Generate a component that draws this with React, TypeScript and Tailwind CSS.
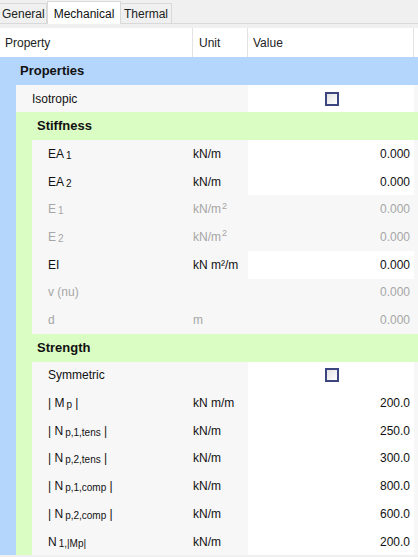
import { ReactNode } from 'react';

const FONT = { fontFamily: '"Liberation Sans", Arial, sans-serif' };

type Row = {
  label: ReactNode;
  unit?: ReactNode;
  value?: string;
  check?: boolean;
  disabled?: boolean;
};

function Sub({ children }: { children: ReactNode }) {
  return <sub className="text-[10px] ml-[2px] relative top-[1px]">{children}</sub>;
}

function Checkbox() {
  return (
    <div className="w-[14px] h-[14px] border-2 border-[#3b4580] bg-gradient-to-br from-[#e4e4e4] to-[#ffffff]" />
  );
}

const sq = <sup className="text-[9px] ml-[1px]">2</sup>;

const stiffness: Row[] = [
  { label: <>EA<Sub>1</Sub></>, unit: 'kN/m', value: '0.000' },
  { label: <>EA<Sub>2</Sub></>, unit: 'kN/m', value: '0.000' },
  { label: <>E<Sub>1</Sub></>, unit: <>kN/m{sq}</>, value: '0.000', disabled: true },
  { label: <>E<Sub>2</Sub></>, unit: <>kN/m{sq}</>, value: '0.000', disabled: true },
  { label: 'EI', unit: 'kN m²/m', value: '0.000' },
  { label: 'v (nu)', value: '0.000', disabled: true },
  { label: 'd', unit: 'm', value: '0.000', disabled: true },
];

const strength: Row[] = [
  { label: 'Symmetric', check: true },
  { label: <>| M<Sub>p</Sub> |</>, unit: 'kN m/m', value: '200.0' },
  { label: <>| N<Sub>p,1,tens</Sub> |</>, unit: 'kN/m', value: '250.0' },
  { label: <>| N<Sub>p,2,tens</Sub> |</>, unit: 'kN/m', value: '300.0' },
  { label: <>| N<Sub>p,1,comp</Sub> |</>, unit: 'kN/m', value: '800.0' },
  { label: <>| N<Sub>p,2,comp</Sub> |</>, unit: 'kN/m', value: '600.0' },
  { label: <>N<Sub>1,|Mp|</Sub></>, unit: 'kN/m', value: '200.0' },
];

function DataRow({ row }: { row: Row }) {
  const text = row.disabled ? 'text-[#a6a6a6]' : 'text-[#111]';
  return (
    <div className={`flex h-[27.7px] items-center bg-[#f7f7f7] ${text}`}>
      <div className="w-[161px] shrink-0 pl-[16px] whitespace-nowrap">{row.label}</div>
      <div className="w-[55px] shrink-0 whitespace-nowrap">{row.unit}</div>
      <div
        className={`w-[166px] h-full shrink-0 flex items-center ${row.disabled ? '' : 'bg-white'} ${
          row.check ? 'justify-start pl-[77px]' : 'justify-end pr-[4px]'
        }`}
      >
        {row.check ? <Checkbox /> : row.value}
      </div>
      <div className="flex-1" />
    </div>
  );
}

function Group({ title, children }: { title: string; children: ReactNode }) {
  return (
    <div className="flex bg-[#dafdc3]">
      <div className="w-[16px] shrink-0" />
      <div className="flex-1">
        <div className="h-[27.7px] flex items-center pl-[5px] font-bold text-[13px] text-[#111]">{title}</div>
        {children}
      </div>
    </div>
  );
}

export default function App() {
  return (
    <div className="w-[418px] h-[557px] overflow-hidden bg-[#f0f0f0] text-[12px]" style={FONT}>
      {/* Tabs */}
      <div className="h-[24px] flex items-end border-b border-[#d9d9d9]">
        <div className="h-[20px] w-[47px] pl-[2px] flex items-center border-r border-t border-[#d9d9d9] text-[#222]">General</div>
        <div className="h-[23px] w-[74px] flex items-start pt-[3px] justify-center bg-white border-x border-t border-[#d9d9d9] -mb-px relative z-10 text-[#111]">
          Mechanical
        </div>
        <div className="h-[20px] w-[51px] flex items-center justify-center border-r border-t border-[#d9d9d9] text-[#222]">Thermal</div>
      </div>
      <div className="h-[4px]" />

      {/* Header */}
      <div className="flex h-[29px] items-center bg-white text-[#222]">
        <div className="w-[193px] h-full flex items-center pl-[5px] border-r border-[#e3e3e3]">Property</div>
        <div className="w-[55px] h-full flex items-center pl-[6px] border-r border-[#e3e3e3]">Unit</div>
        <div className="w-[166px] h-full flex items-center pl-[5px] border-r border-[#e3e3e3]">Value</div>
        <div className="flex-1" />
      </div>

      {/* Properties */}
      <div className="flex bg-[#b4d6fd]">
        <div className="w-[16px] shrink-0" />
        <div className="flex-1">
          <div className="h-[27.7px] flex items-center pl-[4px] font-bold text-[13px] text-[#111]">Properties</div>
          <div className="flex h-[27.7px] items-center bg-[#f7f7f7] text-[#111]">
            <div className="w-[177px] shrink-0 pl-[16px]">Isotropic</div>
            <div className="w-[55px] shrink-0" />
            <div className="w-[166px] h-full shrink-0 bg-white flex items-center pl-[77px]">
              <Checkbox />
            </div>
            <div className="flex-1" />
          </div>
          <Group title="Stiffness">
            {stiffness.map((r, i) => (
              <DataRow key={i} row={r} />
            ))}
          </Group>
          <Group title="Strength">
            {strength.map((r, i) => (
              <DataRow key={i} row={r} />
            ))}
          </Group>
        </div>
      </div>
    </div>
  );
}
